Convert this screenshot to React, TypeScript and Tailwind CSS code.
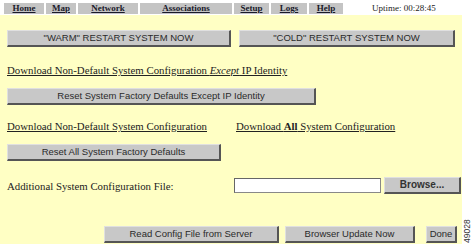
import React from "react";

const navItems: [string, number][] = [
  ["Home", 40],
  ["Map", 30],
  ["Network", 60],
  ["Associations", 92],
  ["Setup", 35],
  ["Logs", 36],
  ["Help", 34],
];

function Btn({ label, w, className = "" }: { label: string; w: number; className?: string }) {
  return (
    <div
      className={
        "h-[17px] bg-[#c8c8c8] border-t border-l border-t-[#e0e0e0] border-l-[#e0e0e0] border-r-2 border-b-2 border-r-[#555] border-b-[#555] flex items-center justify-center text-[9.5px] text-[#2a2a2a] leading-none " +
        className
      }
      style={{ width: w, fontFamily: '"Liberation Sans", Arial, sans-serif' }}
    >
      {label}
    </div>
  );
}

export default function App() {
  const serif = { fontFamily: '"Liberation Serif", "Times New Roman", serif' };
  return (
    <div className="relative w-[474px] h-[244px] bg-white overflow-hidden" style={serif}>
      <div className="flex h-[15px] pt-[3px] pl-[4px] items-start">
        <div className="flex gap-[2px]">
          {navItems.map(([n, w]) => (
            <div
              key={n}
              className="h-[11px] bg-[#c4c4c4] flex items-center justify-center text-[9px] font-bold underline text-[#1a1a2a] leading-none"
              style={{ width: w }}
            >
              {n}
            </div>
          ))}
        </div>
        <div className="ml-[29px] h-[11px] flex items-center text-[9px] text-[#222] leading-none">Uptime: 00:28:45</div>
      </div>
      <div className="w-[462px] h-[229px] bg-[#ffffc4] pl-[7px] pt-[15px] flex flex-col text-[#222]">
        <div className="flex gap-[8px]">
          <Btn label={'"WARM" RESTART SYSTEM NOW'} w={224} />
          <Btn label={'"COLD" RESTART SYSTEM NOW'} w={216} />
        </div>
        <div className="mt-[17px] text-[10.8px] leading-[12px] underline">
          Download Non-Default System Configuration <i>Except</i> IP Identity
        </div>
        <Btn label="Reset System Factory Defaults Except IP Identity" w={309} className="mt-[12px]" />
        <div className="mt-[15px] flex text-[10.8px] leading-[12px]">
          <div className="w-[229px] underline">Download Non-Default System Configuration</div>
          <div className="underline">
            Download <b>All</b> System Configuration
          </div>
        </div>
        <Btn label="Reset All System Factory Defaults" w={214} className="mt-[12px]" />
        <div className="mt-[16px] flex items-center h-[17px]">
          <div className="w-[227px] text-[10.8px] leading-[12px]">Additional System Configuration File:</div>
          <div className="w-[147px] h-[15px] bg-white border border-[#888] border-t-[#666] border-l-[#666]" />
          <div
            className="ml-[3px] w-[77px] h-[17px] bg-[#c8c8c8] border-t border-l border-t-[#e0e0e0] border-l-[#e0e0e0] border-r-2 border-b-2 border-r-[#555] border-b-[#555] flex items-center justify-center text-[10px] font-bold text-[#333] leading-none"
            style={{ fontFamily: '"Liberation Sans", Arial, sans-serif' }}
          >
            Browse...
          </div>
        </div>
        <div className="mt-[32px] flex pl-[97px]">
          <Btn label="Read Config File from Server" w={175} />
          <Btn label="Browser Update Now" w={130} className="ml-[6px]" />
          <Btn label="Done" w={31} className="ml-[11px]" />
        </div>
      </div>
      <div
        className="absolute left-[463px] top-[243px] origin-top-left -rotate-90 text-[8.5px] text-[#333] leading-none whitespace-nowrap"
        style={{ fontFamily: '"Liberation Sans", Arial, sans-serif' }}
      >
        49028
      </div>
    </div>
  );
}
